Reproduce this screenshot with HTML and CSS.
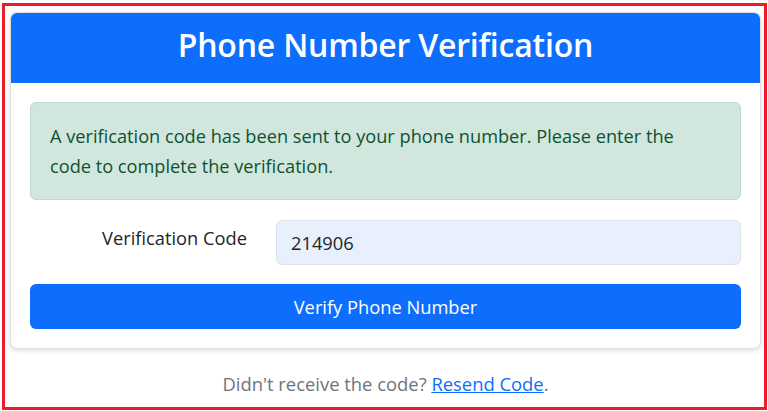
FILE: index.html
```html
<!DOCTYPE html>
<html lang="en">
<head>
<meta charset="utf-8">
<title>Phone Number Verification</title>
<link rel="stylesheet" href="styles.css">
</head>
<body>
<div class="frame">
  <div class="card">
    <div class="card-header">
      <h2 class="title">Phone Number Verification</h2>
    </div>
    <div class="card-body">
      <div class="alert">A verification code has been sent to your phone number. Please enter the code to complete the verification.</div>
      <form class="form">
        <div class="row">
          <label class="label" for="code">Verification Code</label>
          <input class="input" id="code" type="text" value="214906">
        </div>
        <button class="btn" type="button">Verify Phone Number</button>
      </form>
    </div>
  </div>
  <p class="footer">Didn't receive the code? <a class="link" href="#">Resend Code</a>.</p>
</div>
</body>
</html>
```

FILE: styles.css
```css
* { box-sizing: border-box; }
html, body { margin: 0; padding: 0; background: #fff; }
body {
  font-family: "Open Sans", "Noto Sans", sans-serif;
  color: #212529;
  width: 768px;
  height: 411px;
  overflow: hidden;
}
.frame {
  margin: 3px 1px 1px 2px;
  height: 407px;
  border: 3px solid #ec1c2a;
  padding: 6px 3px 0 5px;
}
.card {
  background: #fff;
  border: 1px solid rgba(0,0,0,0.12);
  border-radius: 7px;
  box-shadow: 0 2px 5px rgba(0,0,0,0.12);
  overflow: hidden;
}
.card-header {
  background: #0d6efd;
  height: 70px;
  display: flex;
  align-items: center;
  justify-content: center;
  padding-bottom: 8px;
}
.title {
  margin: 0;
  color: #fff;
  font-size: 32px;
  font-weight: 600;
  letter-spacing: -0.2px;
}
.card-body {
  padding: 19px 19px 19px 19px;
}
.alert {
  background: #d1e7dd;
  border: 1px solid #badbcc;
  border-radius: 6px;
  color: #0f5132;
  font-size: 18.2px;
  line-height: 30px;
  padding: 18px 36px 18px 19px;
}
.form { margin-top: 20px; }
.row {
  display: grid;
  grid-template-columns: 217px 1fr;
  column-gap: 29px;
  align-items: start;
}
.label {
  text-align: right;
  font-size: 18.3px;
  color: #212529;
  padding-top: 5px;
}
.input {
  height: 45px;
  border: 1px solid #dee2e6;
  border-radius: 6px;
  background: #e8f0fe;
  font-family: inherit;
  font-size: 18.3px;
  color: #212529;
  padding: 0 14px;
  width: 100%;
}
.btn {
  display: block;
  width: 100%;
  margin-top: 19px;
  height: 45px;
  border: none;
  border-radius: 6px;
  background: #0d6efd;
  color: #fff;
  font-family: inherit;
  font-size: 18.3px;
}
.footer {
  margin: 22px 0 0;
  text-align: center;
  color: #6c757d;
  font-size: 18.4px;
}
.link { color: #0d6efd; text-decoration: underline; }
```
